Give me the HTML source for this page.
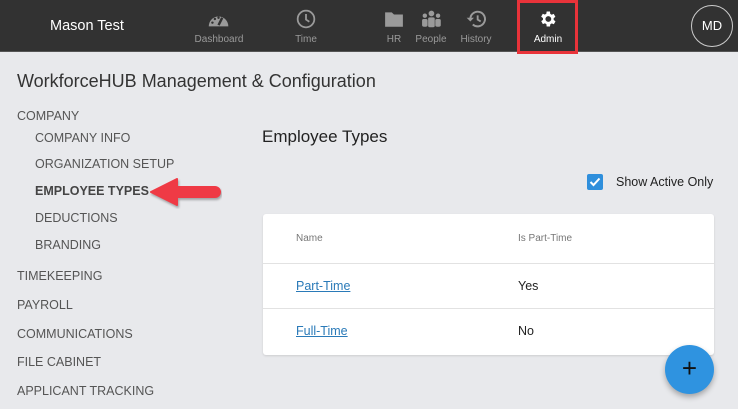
<!DOCTYPE html>
<html><head><meta charset="utf-8"><style>
*{margin:0;padding:0;box-sizing:border-box}
body{width:738px;height:409px;overflow:hidden;background:#e8e9ec;font-family:"Liberation Sans",sans-serif;position:relative}
.hdr{position:absolute;left:0;top:0;width:738px;height:52px;background:#323232;border-bottom:1px solid #555}
.abs{position:absolute}
.nav{position:absolute;top:9px;text-align:center;color:#9a9a9a;font-size:10px;transform:translateX(-50%)}
.nav svg{display:block;margin:0 auto 5px}
.side{position:absolute;color:#555;font-size:12.5px}
.sub{left:35px}
.top{left:17px}
</style></head><body>
<div class="hdr">
<div class="abs" style="left:50px;top:18px;color:#fff;font-size:14.5px">Mason Test</div>
<div class="nav" style="left:219px"><svg width="22" height="20" viewBox="0 0 18 16"><path d="M1 14A8 8 0 0 1 17 14Z" fill="#9a9a9a"/><path d="M9 13L12 7" stroke="#323232" stroke-width="2"/><circle cx="4" cy="11" r="1" fill="#323232"/><circle cx="6" cy="8" r="1" fill="#323232"/><circle cx="9" cy="7" r="1" fill="#323232"/></svg>Dashboard</div>
<div class="nav" style="left:306px"><svg width="22" height="20" viewBox="0 0 18 18"><circle cx="9" cy="9" r="7.5" fill="none" stroke="#9a9a9a" stroke-width="1.6"/><path d="M9 4.5V9.5L12 11.5" stroke="#9a9a9a" stroke-width="1.6" fill="none"/></svg>Time</div>
<div class="nav" style="left:394px"><svg width="20" height="20" viewBox="0 0 18 16"><path d="M1 2H7L9 4H17V15H1Z" fill="#9a9a9a"/></svg>HR</div>
<div class="nav" style="left:431px"><svg width="22" height="20" viewBox="0 0 20 16"><circle cx="10" cy="3" r="2.6" fill="#9a9a9a"/><circle cx="4" cy="5" r="2" fill="#9a9a9a"/><circle cx="16" cy="5" r="2" fill="#9a9a9a"/><rect x="7" y="6.5" width="6" height="9" rx="1.5" fill="#9a9a9a"/><rect x="1.5" y="8" width="5" height="7" rx="1.5" fill="#9a9a9a"/><rect x="13.5" y="8" width="5" height="7" rx="1.5" fill="#9a9a9a"/></svg>People</div>
<div class="nav" style="left:476px"><svg width="22" height="20" viewBox="0 0 18 16"><path d="M4 8A6 6 0 1 1 6 12.5" fill="none" stroke="#9a9a9a" stroke-width="1.6"/><path d="M1 7L4 10L7 7Z" fill="#9a9a9a"/><path d="M10 5V8.5L12.5 10" stroke="#9a9a9a" stroke-width="1.5" fill="none"/></svg>History</div>
<div class="nav" style="left:548px;color:#fff"><svg width="21" height="20" viewBox="0 0 24 24"><path fill="#fff" d="M19.4 13a7.8 7.8 0 0 0 0-2l2.1-1.6-2-3.5-2.5 1a7.3 7.3 0 0 0-1.7-1L15 3h-4l-.4 2.7a7.3 7.3 0 0 0-1.7 1l-2.5-1-2 3.5L6.6 11a7.8 7.8 0 0 0 0 2l-2.1 1.6 2 3.5 2.5-1a7.3 7.3 0 0 0 1.7 1L11 21h4l.4-2.7a7.3 7.3 0 0 0 1.7-1l2.5 1 2-3.5ZM13 15.5A3.5 3.5 0 1 1 13 8.5 3.5 3.5 0 0 1 13 15.5Z" transform="translate(-1 0)"/></svg>Admin</div>
<div class="abs" style="left:517px;top:0;width:61px;height:54px;border:3px solid #e8333a"></div>
<div class="abs" style="left:691px;top:5px;width:42px;height:42px;border:1.5px solid #ccc;border-radius:50%;color:#fff;font-size:13px;text-align:center;line-height:39px">MD</div>
</div>
<div class="abs" style="left:17px;top:71px;font-size:18px;color:#333">WorkforceHUB Management &amp; Configuration</div>
<div class="side top" style="top:109px">COMPANY</div>
<div class="side sub" style="top:131px">COMPANY INFO</div>
<div class="side sub" style="top:157px">ORGANIZATION SETUP</div>
<div class="side sub" style="top:184px;font-weight:bold;color:#444">EMPLOYEE TYPES</div>
<div class="side sub" style="top:211px">DEDUCTIONS</div>
<div class="side sub" style="top:238px">BRANDING</div>
<div class="side top" style="top:269px">TIMEKEEPING</div>
<div class="side top" style="top:298px">PAYROLL</div>
<div class="side top" style="top:327px">COMMUNICATIONS</div>
<div class="side top" style="top:355px">FILE CABINET</div>
<div class="side top" style="top:384px">APPLICANT TRACKING</div>
<svg class="abs" style="left:147px;top:175px" width="75" height="34" viewBox="0 0 75 34"><path d="M4 17L30 4V12H68A5 5 0 0 1 68 22H30V30Z" fill="#ef3a45" stroke="#ef3a45" stroke-linejoin="round" stroke-width="2" style="filter:drop-shadow(1px 2px 1px rgba(0,0,0,.3))"/></svg>
<div class="abs" style="left:262px;top:127px;font-size:17px;color:#222">Employee Types</div>
<div class="abs" style="left:587px;top:174px;width:16px;height:16px;background:#2f8fdc;border-radius:2px"><svg width="16" height="16"><path d="M3.5 8L6.5 11L12.5 4.5" stroke="#fff" stroke-width="2" fill="none"/></svg></div>
<div class="abs" style="left:616px;top:175px;font-size:12.5px;color:#222">Show Active Only</div>
<div class="abs" style="left:263px;top:214px;width:451px;height:141px;background:#fff;border-radius:3px;box-shadow:0 1px 2px rgba(0,0,0,.12)">
<div class="abs" style="left:33px;top:19px;font-size:10px;color:#777">Name</div>
<div class="abs" style="left:255px;top:19px;font-size:10px;color:#777">Is Part-Time</div>
<div class="abs" style="left:0;top:49px;width:451px;height:1px;background:#e2e2e2"></div>
<div class="abs" style="left:33px;top:65px;font-size:12.5px;color:#2a7ab8;text-decoration:underline">Part-Time</div>
<div class="abs" style="left:255px;top:65px;font-size:12.5px;color:#222">Yes</div>
<div class="abs" style="left:0;top:94px;width:451px;height:1px;background:#e2e2e2"></div>
<div class="abs" style="left:33px;top:110px;font-size:12.5px;color:#2a7ab8;text-decoration:underline">Full-Time</div>
<div class="abs" style="left:255px;top:110px;font-size:12.5px;color:#222">No</div>
</div>
<div class="abs" style="left:665px;top:345px;width:49px;height:49px;border-radius:50%;background:#2f93e0;box-shadow:0 3px 6px rgba(0,0,0,.3);color:#111;font-size:26px;text-align:center;line-height:47px">+</div>
</body></html>
